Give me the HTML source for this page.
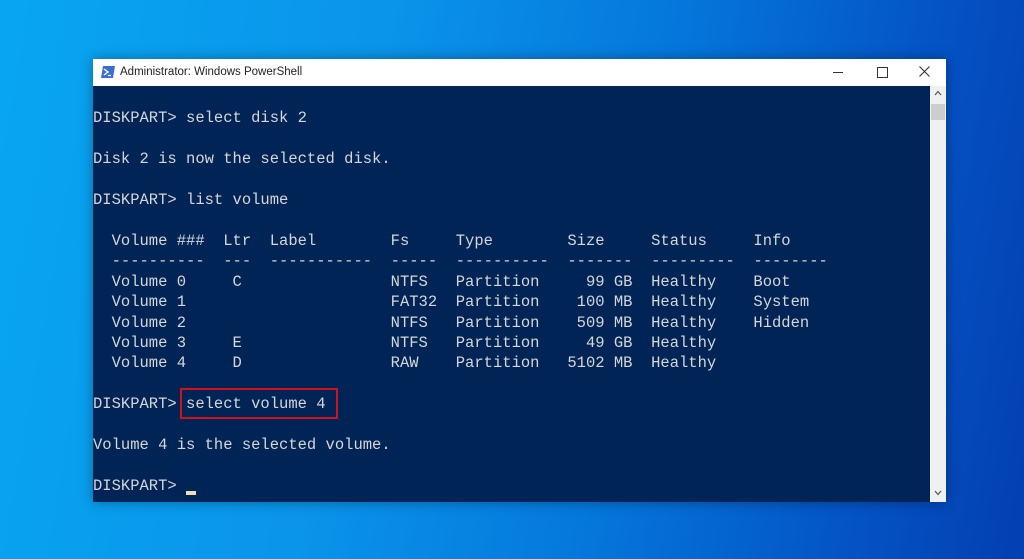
<!DOCTYPE html>
<html><head><meta charset="utf-8"><style>
html,body{margin:0;padding:0;width:1024px;height:559px;overflow:hidden}
body{background:linear-gradient(100deg,#08a6f2 0%,#0a94ea 35%,#0578dc 60%,#0452c4 85%,#033fb0 100%);position:relative;font-family:"Liberation Sans",sans-serif}
.win{position:absolute;left:93px;top:59px;width:853px;height:443px;background:#fff;box-shadow:0 0 12px rgba(0,0,0,.35)}
.title{position:absolute;left:0;top:0;width:853px;height:27px;background:#fff}
.title .t{position:absolute;left:27px;top:7px;font-size:11.5px;color:#222}
.con{position:absolute;left:0;top:27px;width:837px;height:416px;background:#012456;overflow:hidden}
.sb{position:absolute;left:837px;top:27px;width:16px;height:416px;background:#f0f0f0}
pre{margin:0;position:absolute;left:0;top:22px;font-family:"Liberation Mono",monospace;font-size:15.5px;line-height:20.45px;color:#d6d6d6;letter-spacing:0}
.box{position:absolute;left:87px;top:302px;width:154px;height:27px;border:2.5px solid #d0141e;border-radius:1px}
.cur{position:absolute;left:93px;top:405px;width:10px;height:4px;background:#f0e0b8}
</style></head><body>
<div class="win">
 <div class="title">
  <svg style="position:absolute;left:8px;top:7px" width="14" height="12" viewBox="0 0 14 12"><polygon points="2,0 14,0 12,12 0,12" fill="#3a6fd0"/><path d="M3,3 L7,6 L3,9" stroke="#fff" stroke-width="1.4" fill="none"/><line x1="7" y1="9.5" x2="10" y2="9.5" stroke="#fff" stroke-width="1.2"/></svg>
  <span class="t">Administrator: Windows PowerShell</span>
  <div style="position:absolute;left:740px;top:13px;width:10px;height:1px;background:#333"></div>
  <div style="position:absolute;left:784px;top:8px;width:9px;height:9px;border:1px solid #333"></div>
  <svg style="position:absolute;left:826px;top:7px" width="11" height="11"><path d="M0.5,0.5 L10.5,10.5 M10.5,0.5 L0.5,10.5" stroke="#333" stroke-width="1.1"/></svg>
 </div>
 <div class="con">
<pre>DISKPART&gt; select disk 2

Disk 2 is now the selected disk.

DISKPART&gt; list volume

  Volume ###  Ltr  Label        Fs     Type        Size     Status     Info
  ----------  ---  -----------  -----  ----------  -------  ---------  --------
  Volume 0     C                NTFS   Partition     99 GB  Healthy    Boot
  Volume 1                      FAT32  Partition    100 MB  Healthy    System
  Volume 2                      NTFS   Partition    509 MB  Healthy    Hidden
  Volume 3     E                NTFS   Partition     49 GB  Healthy
  Volume 4     D                RAW    Partition   5102 MB  Healthy

DISKPART&gt; select volume 4

Volume 4 is the selected volume.

DISKPART&gt; </pre>
  <div class="box"></div>
  <div class="cur"></div>
 </div>
 <div class="sb">
  <svg style="position:absolute;left:4px;top:4px" width="8" height="6"><path d="M1,5 L4,1.5 L7,5" stroke="#555" fill="none" stroke-width="1.2"/></svg>
  <div style="position:absolute;left:1px;top:18px;width:14px;height:16px;background:#cdcdcd"></div>
  <svg style="position:absolute;left:4px;top:404px" width="8" height="6"><path d="M1,1 L4,4.5 L7,1" stroke="#555" fill="none" stroke-width="1.2"/></svg>
 </div>
</div>
</body></html>
